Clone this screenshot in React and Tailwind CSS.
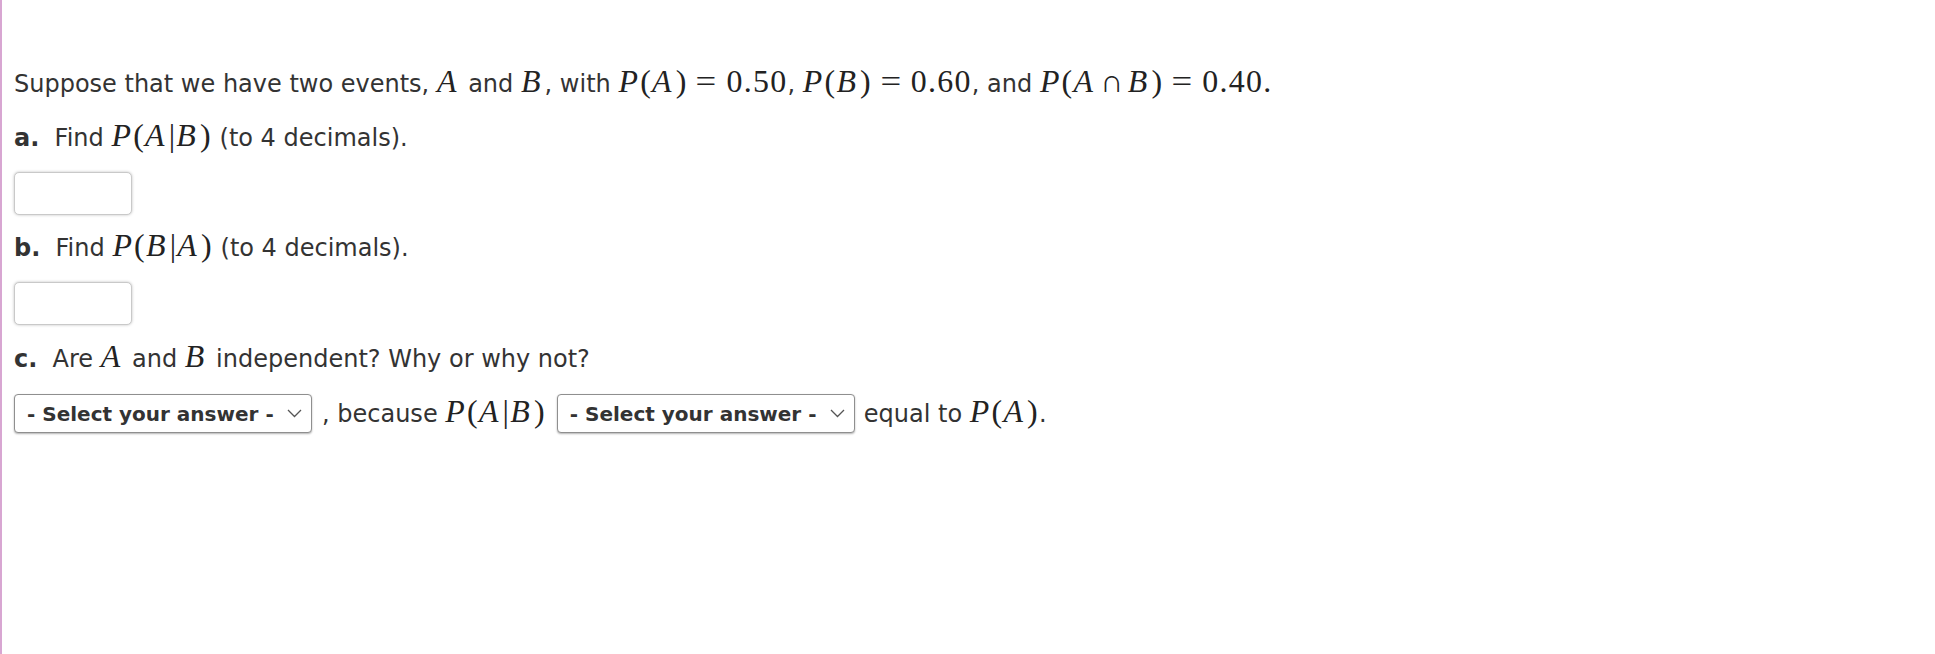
const Math = ({ children }) => (
  <span className="whitespace-nowrap font-['Liberation_Serif',serif] text-[1.33em] leading-none tracking-[0.04em] text-[#222]">
    {children}
  </span>
);

const I = ({ children }) => <i className="pr-[0.09em]">{children}</i>;
const P = () => <i className="pr-[0.03em]">P</i>;
const Rel = ({ children }) => (
  <span className="mx-[0.22em] inline-block w-[0.78em] text-center">
    <span className="inline-block scale-x-[1.15]">{children}</span>
  </span>
);
const Bin = ({ children }) => <span className="mx-[0.1em]">{children}</span>;

function Answer() {
  return (
    <input
      type="text"
      className="mt-[16px] block h-[43px] w-[118px] rounded-[5px] border border-[#c9c9c9] bg-white shadow-[0_0_3px_rgba(0,0,0,0.25)] outline-none"
    />
  );
}

function Picker() {
  return (
    <span className="relative inline-block">
      <select
        defaultValue=""
        className="h-[39px] w-[298px] appearance-none rounded-[4px] border border-[#8f8f8f] bg-white pl-[12px] pr-8 font-['DejaVu_Sans',sans-serif] text-[20px] font-bold text-[#333] shadow-[0_1px_2px_rgba(0,0,0,0.3)] outline-none"
      >
        <option value="">- Select your answer -</option>
        <option value="yes">Yes</option>
        <option value="no">No</option>
      </select>
      <svg
        width="15"
        height="9"
        viewBox="0 0 15 9"
        className="pointer-events-none absolute right-[10px] top-[15px]"
      >
        <polyline points="1,1 7.5,7.5 14,1" fill="none" stroke="#555" strokeWidth="1.3" />
      </svg>
    </span>
  );
}

export default function App() {
  return (
    <div className="min-h-[654px] border-l-2 border-[#d8a6d2] bg-white pl-3 pt-[66px] font-['DejaVu_Sans',sans-serif] text-[24px] text-[#333]">
      <p className="leading-[36px]">
        Suppose that we have two events, <Math><I>A</I></Math> and <Math><I>B</I></Math>, with{" "}
        <Math>
          <P />(<I>A</I>)<Rel>=</Rel>0.50
        </Math>
        ,{" "}
        <Math>
          <P />(<I>B</I>)<Rel>=</Rel>0.60
        </Math>
        , and{" "}
        <Math>
          <P />(<I>A</I>
          <Bin>∩</Bin>
          <I>B</I>)<Rel>=</Rel>0.40.
        </Math>
      </p>

      <p className="mt-[18px] leading-[36px]">
        <b>a.</b>&nbsp; Find{" "}
        <Math>
          <P />(<I>A</I>|<I>B</I>)
        </Math>{" "}
        (to 4 decimals).
      </p>
      <Answer />

      <p className="mt-[15px] leading-[36px]">
        <b>b.</b>&nbsp; Find{" "}
        <Math>
          <P />(<I>B</I>|<I>A</I>)
        </Math>{" "}
        (to 4 decimals).
      </p>
      <Answer />

      <p className="mt-[16px] leading-[36px]">
        <b>c.</b>&nbsp; Are <Math><I>A</I></Math> and <Math><I>B</I></Math> independent? Why or why not?
      </p>

      <div className="mt-[17px] flex h-[39px] items-center">
        <Picker />
        <span className="ml-[10px] mr-[11px]">
          , because{" "}
          <Math>
            <P />(<I>A</I>|<I>B</I>)
          </Math>
        </span>
        <Picker />
        <span className="ml-[9px]">
          equal to{" "}
          <Math>
            <P />(<I>A</I>)
          </Math>
          .
        </span>
      </div>
    </div>
  );
}
